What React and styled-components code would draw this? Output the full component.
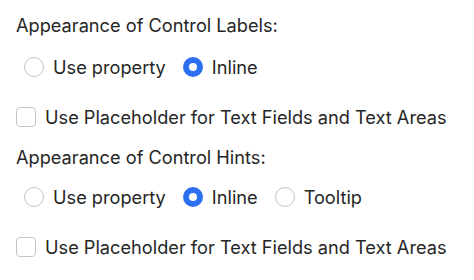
import React from "react";
import styled, { createGlobalStyle } from "styled-components";

const Global = createGlobalStyle`
  html, body { margin: 0; padding: 0; background: #ffffff; }
  body { font-family: Inter, "Noto Sans", sans-serif; color: #262626; }
`;

const Panel = styled.div`
  display: flex;
  flex-direction: column;
  padding: 12px 0 0 16px;
`;

const Title = styled.div`
  font-size: 18.2px;
  line-height: 26px;
  height: 26px;
  margin-top: ${(p) => p.$mt || 0}px;
`;

const RadioRow = styled.div`
  display: flex;
  align-items: center;
  gap: 17px;
  padding-left: 8px;
  margin-top: ${(p) => p.$mt}px;
  height: 26px;
`;

const Option = styled.label`
  display: flex;
  align-items: center;
  gap: 9px;
  font-size: 18.2px;
`;

const RadioCircle = styled.span`
  box-sizing: border-box;
  width: 20px;
  height: 20px;
  border-radius: 50%;
  flex: none;
  background: #ffffff;
  border: ${(p) => (p.$on ? "6px solid #2d6ff1" : "1px solid #c6c6c6")};
`;

const CheckRow = styled.label`
  display: flex;
  align-items: center;
  gap: 9px;
  font-size: 18.2px;
  margin-top: ${(p) => p.$mt}px;
  height: 26px;
`;

const Box = styled.span`
  box-sizing: border-box;
  width: 20px;
  height: 20px;
  border: 1px solid #c6c6c6;
  border-radius: 4px;
  background: #fff;
  flex: none;
`;

function Radio({ on, label }) {
  return (
    <Option>
      <RadioCircle $on={on} />
      {label}
    </Option>
  );
}

export default function App() {
  return (
    <>
      <Global />
      <Panel>
        <Title>Appearance of Control Labels:</Title>
        <RadioRow $mt={16}>
          <Radio label="Use property" />
          <Radio on label="Inline" />
        </RadioRow>
        <CheckRow $mt={24}>
          <Box />
          Use Placeholder for Text Fields and Text Areas
        </CheckRow>
        <Title $mt={14}>Appearance of Control Hints:</Title>
        <RadioRow $mt={14}>
          <Radio label="Use property" />
          <Radio on label="Inline" />
          <Radio label="Tooltip" />
        </RadioRow>
        <CheckRow $mt={24}>
          <Box />
          Use Placeholder for Text Fields and Text Areas
        </CheckRow>
      </Panel>
    </>
  );
}
